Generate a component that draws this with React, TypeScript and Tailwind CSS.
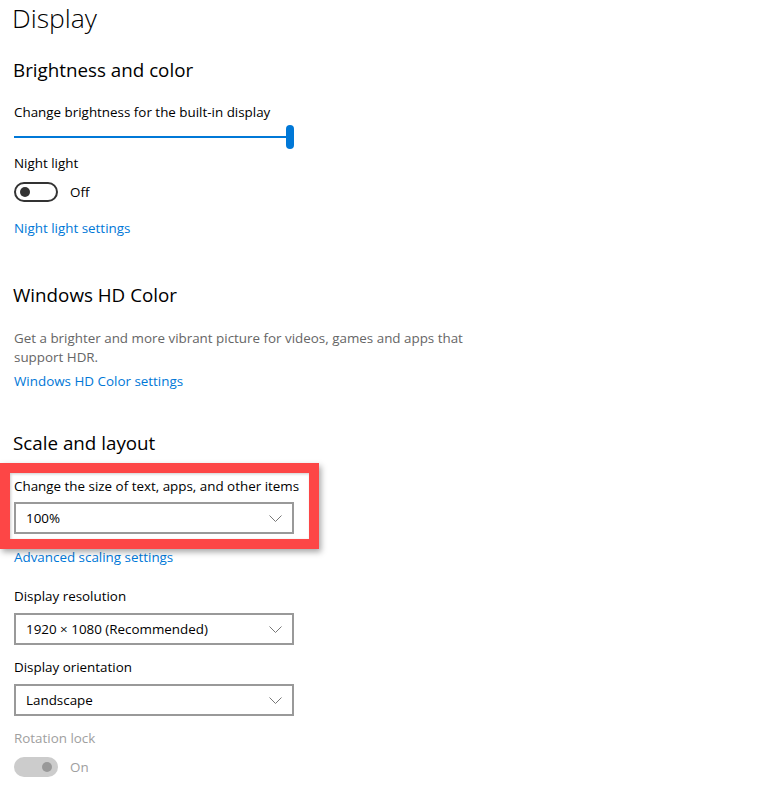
import React from 'react';

const font = "font-['Open_Sans','Noto_Sans',sans-serif]";

const Chevron = () => (
  <svg width="13" height="7" viewBox="0 0 13 7" fill="none" className="shrink-0">
    <path d="M0.5 0.5L6.5 6.5L12.5 0.5" stroke="#777" strokeWidth="1" />
  </svg>
);

const Dropdown = ({ value, className = '' }: { value: string; className?: string }) => (
  <div
    className={`w-[280px] h-8 border-2 border-[#999] bg-white flex items-center justify-between pl-[10px] pr-[10px] ${className}`}
  >
    <span className="text-[13.4px] text-black leading-5">{value}</span>
    <Chevron />
  </div>
);

const Label = ({
  children,
  className = '',
  muted = false,
}: {
  children: React.ReactNode;
  className?: string;
  muted?: boolean;
}) => (
  <div className={`text-[13.4px] leading-5 h-5 ${muted ? 'text-[#a0a0a0]' : 'text-black'} ${className}`}>
    {children}
  </div>
);

const Link = ({ children, className = '' }: { children: React.ReactNode; className?: string }) => (
  <div className={`text-[13.4px] leading-5 h-5 text-[#0078d7] ${className}`}>{children}</div>
);

const Heading = ({ children, className = '' }: { children: React.ReactNode; className?: string }) => (
  <h2 className={`text-[18.8px] leading-7 h-7 text-black -ml-px ${className}`}>{children}</h2>
);

export default function App() {
  return (
    <div className={`relative w-[780px] h-[788px] overflow-hidden bg-white pl-[14px] ${font}`}>
      <h1 className="text-[26.5px] leading-9 h-9 font-light text-black -ml-[2px]">Display</h1>

      <Heading className="mt-5">Brightness and color</Heading>
      <Label className="mt-[18px]">Change brightness for the built-in display</Label>

      {/* brightness slider */}
      <div className="mt-[3px] w-[280px] h-6 flex items-center">
        <div className="flex-1 h-[2px] bg-[#0078d7]" />
        <div className="w-2 h-6 rounded-full bg-[#0078d7]" />
      </div>

      <Label className="mt-1">Night light</Label>
      <div className="mt-[9px] flex items-center gap-3 h-5">
        <div className="w-11 h-5 rounded-full border-2 border-[#333] flex items-center pl-[4px]">
          <div className="w-[10px] h-[10px] rounded-full bg-[#333]" />
        </div>
        <span className="text-[13.4px] text-black">Off</span>
      </div>

      <Link className="mt-4">Night light settings</Link>

      <Heading className="mt-[43px]">Windows HD Color</Heading>
      <p className="mt-5 w-[456px] text-[13.4px] leading-[19px] text-[#666]">
        Get a brighter and more vibrant picture for videos, games and apps that support HDR.
      </p>
      <Link className="mt-1">Windows HD Color settings</Link>

      <Heading className="mt-[38px]">Scale and layout</Heading>
      <Label className="mt-[19px]">Change the size of text, apps, and other items</Label>
      <Dropdown value="100%" className="mt-[6px]" />
      <Link className="mt-[13px]">Advanced scaling settings</Link>

      <Label className="mt-[19px]">Display resolution</Label>
      <Dropdown value="1920 × 1080 (Recommended)" className="mt-[7px]" />

      <Label className="mt-3">Display orientation</Label>
      <Dropdown value="Landscape" className="mt-[7px]" />

      <Label className="mt-3" muted>
        Rotation lock
      </Label>
      <div className="mt-[9px] flex items-center gap-3 h-5">
        <div className="w-11 h-5 rounded-full bg-[#ccc] flex items-center justify-end pr-[6px]">
          <div className="w-[10px] h-[10px] rounded-full bg-[#999]" />
        </div>
        <span className="text-[13.4px] text-[#a0a0a0]">On</span>
      </div>

      {/* annotation highlight */}
      <div className="absolute left-0 top-[463px] w-[319px] h-[86px] border-[10px] border-[#fd4646] shadow-[2px_3px_6px_rgba(0,0,0,0.35),inset_1px_1px_3px_rgba(0,0,0,0.2)] pointer-events-none" />
    </div>
  );
}
